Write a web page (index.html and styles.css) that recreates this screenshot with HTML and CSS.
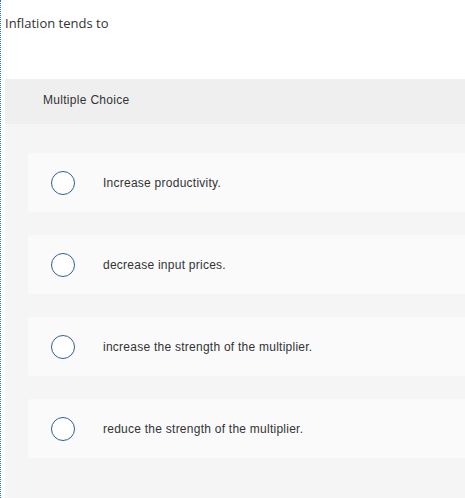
FILE: index.html
```html
<!DOCTYPE html>
<html>
<head>
<meta charset="utf-8">
<link rel="stylesheet" href="styles.css">
</head>
<body>
<div class="frame">
  <div class="question">Inflation tends to</div>
  <div class="panel">
    <div class="panel-head">Multiple Choice</div>
    <div class="options">
      <div class="option"><span class="radio"></span><span class="label">Increase productivity.</span></div>
      <div class="option"><span class="radio"></span><span class="label">decrease input prices.</span></div>
      <div class="option"><span class="radio"></span><span class="label">increase the strength of the multiplier.</span></div>
      <div class="option"><span class="radio"></span><span class="label">reduce the strength of the multiplier.</span></div>
    </div>
  </div>
</div>
</body>
</html>
```
FILE: styles.css
```css
html, body {
  margin: 0;
  padding: 0;
  background: #ffffff;
}
body {
  font-family: "Liberation Sans", Arial, sans-serif;
  color: #333333;
}
.frame {
  width: 465px;
  height: 498px;
  box-sizing: border-box;
  border-left: 1px dotted #2a6fd6;
  padding-left: 4px;
  overflow: hidden;
}
.question {
  font-family: "Open Sans", "Liberation Sans", sans-serif;
  font-size: 13px;
  padding-top: 14px;
  height: 79px;
  box-sizing: border-box;
  color: #333;
}
.panel {
  background: #f5f5f5;
  height: 419px;
}
.panel-head {
  background: #efefef;
  height: 45px;
  box-sizing: border-box;
  padding: 14px 0 0 38px;
  font-size: 12px;
  letter-spacing: 0.3px;
  color: #333;
}
.options {
  display: flex;
  flex-direction: column;
  gap: 23px;
  padding: 29px 0 0 23px;
}
.option {
  background: #fafafa;
  height: 59px;
  border-radius: 3px 0 0 3px;
  display: flex;
  align-items: center;
  padding-left: 23px;
}
.radio {
  width: 22px;
  height: 22px;
  border: 1.5px solid #2d5f95;
  border-radius: 50%;
  background: #fff;
  flex: none;
}
.label {
  margin-left: 28px;
  font-size: 12px;
  letter-spacing: 0.25px;
  color: #333;
}
```
